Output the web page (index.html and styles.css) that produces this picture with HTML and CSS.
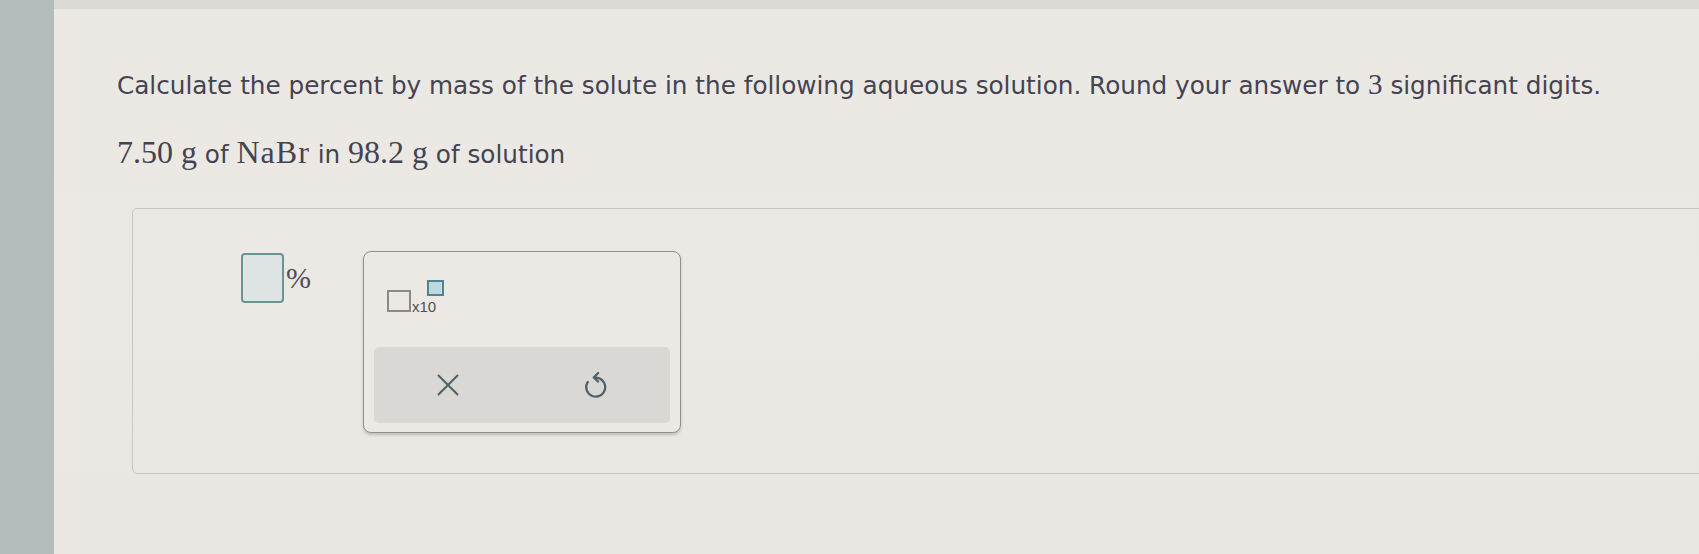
FILE: index.html
```html
<!DOCTYPE html>
<html>
<head>
<meta charset="utf-8">
<link rel="stylesheet" href="styles.css">
</head>
<body>
<div class="screen">
  <div class="strip"></div>
  <div class="main">
    <div class="topband"></div>
    <div class="content">
      <p class="q">Calculate the percent by mass of the solute in the following aqueous solution. Round your answer to <span class="m m-small">3</span> significant digits.</p>
      <p class="given"><span class="m">7.50 g</span> of <span class="m nb">NaBr</span> in <span class="m">98.2 g</span> of solution</p>
      <div class="answer">
        <div class="field">
          <span class="inbox"></span>
          <span class="pct">%</span>
        </div>
        <div class="keypad">
          <div class="expr">
            <span class="mant"></span>
            <span class="x10">x10</span>
            <span class="exp"></span>
          </div>
          <div class="panel">
            <div class="btn">
              <svg width="22" height="22" viewBox="0 0 22 22"><path d="M1.5 1.5 L20.5 20.5 M20.5 1.5 L1.5 20.5" stroke="#4f6066" stroke-width="2" fill="none" stroke-linecap="round"/></svg>
            </div>
            <div class="btn">
              <svg width="27" height="29" viewBox="0 0 24 26"><path d="M11 6 A8.5 8.5 0 1 1 4.2 9.8" stroke="#4f6066" stroke-width="2" fill="none" stroke-linecap="round"/><path d="M13.5 1.8 L9.5 5.8 L13.5 9.5" stroke="#4f6066" stroke-width="2" fill="none" stroke-linecap="round" stroke-linejoin="round"/></svg>
            </div>
          </div>
        </div>
      </div>
    </div>
  </div>
</div>
</body>
</html>
```

FILE: styles.css
```css
html, body {
  margin: 0;
  padding: 0;
  width: 1699px;
  height: 554px;
  overflow: hidden;
  background: #ebe8e3;
}

.screen {
  display: flex;
  height: 554px;
}

.strip {
  width: 54px;
  flex: none;
  background: #b3bcbb;
}

.main {
  flex: 1;
  display: flex;
  flex-direction: column;
  min-width: 0;
  overflow: hidden;
  background: linear-gradient(180deg, #ebe8e3 0%, #ece9e4 60%, #e9e6e1 100%);
}

.topband {
  height: 9px;
  background: #dcdad6;
}

.content {
  padding: 62px 0 0 63px;
}

.q {
  margin: 0;
  font-family: "DejaVu Sans", Verdana, sans-serif;
  font-size: 24.7px;
  line-height: 30px;
  color: #444350;
  white-space: nowrap;
}

.m {
  font-family: "Liberation Serif", "Times New Roman", serif;
  font-size: 32px;
  line-height: 20px;
}

.m-small {
  font-size: 29px;
}

.nb {
  letter-spacing: 1px;
}

.given {
  margin: 39px 0 0 0;
  font-family: "DejaVu Sans", Verdana, sans-serif;
  font-size: 24.7px;
  line-height: 30px;
  color: #444350;
  white-space: nowrap;
}

.answer {
  margin: 38px 0 0 15px;
  width: 1650px;
  height: 266px;
  box-sizing: border-box;
  border: 1.5px solid #c8c6c2;
  border-radius: 5px;
  display: flex;
  align-items: flex-start;
  padding: 44px 0 0 108px;
}

.field {
  display: flex;
  align-items: flex-start;
}

.inbox {
  display: block;
  width: 43px;
  height: 50px;
  box-sizing: border-box;
  border: 2px solid #6a9494;
  border-radius: 4px;
  background: #dde4e3;
}

.pct {
  font-family: "Liberation Serif", "Times New Roman", serif;
  font-size: 30px;
  line-height: 30px;
  color: #4d4d55;
  margin: 10px 0 0 2px;
}

.keypad {
  margin: -2px 0 0 52px;
  width: 318px;
  height: 182px;
  box-sizing: border-box;
  border: 1.5px solid #8f918f;
  border-radius: 8px;
  background: #ece9e4;
  box-shadow: 0 2px 3px rgba(0, 0, 0, 0.18);
  display: flex;
  flex-direction: column;
  padding: 0 10px 9px 10px;
}

.expr {
  height: 95px;
  display: flex;
  align-items: flex-start;
  padding: 28px 0 0 13px;
  box-sizing: border-box;
}

.mant {
  display: block;
  width: 24px;
  height: 22px;
  margin-top: 10px;
  box-sizing: border-box;
  border: 2px solid #8a8a88;
}

.x10 {
  font-family: "Liberation Sans", Arial, sans-serif;
  font-size: 15px;
  line-height: 15px;
  color: #4f5055;
  margin: 19px 0 0 1px;
}

.exp {
  display: block;
  width: 17px;
  height: 16px;
  margin: 0 0 0 -9px;
  box-sizing: border-box;
  border: 2px solid #4f8490;
  background: #bfd8df;
}

.panel {
  flex: 1;
  background: #d9d8d5;
  border-radius: 5px;
  display: grid;
  grid-template-columns: 1fr 1fr;
}

.btn {
  display: flex;
  align-items: center;
  justify-content: center;
}
```
